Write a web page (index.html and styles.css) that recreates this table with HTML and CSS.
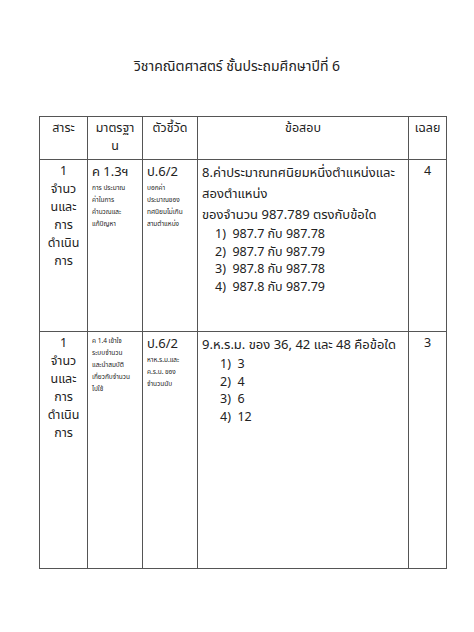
FILE: index.html
```html
<!DOCTYPE html>
<html lang="th">
<head>
<meta charset="utf-8">
<link rel="stylesheet" href="styles.css">
</head>
<body>
<div class="page">
  <h1 class="title">วิชาคณิตศาสตร์ ชั้นประถมศึกษาปีที่ 6</h1>
  <table class="exam">
    <colgroup>
      <col class="c1"><col class="c2"><col class="c3"><col class="c4"><col class="c5">
    </colgroup>
    <thead>
      <tr class="head">
        <th>สาระ</th>
        <th>มาตรฐา<br>น</th>
        <th>ตัวชี้วัด</th>
        <th>ข้อสอบ</th>
        <th>เฉลย</th>
      </tr>
    </thead>
    <tbody>
      <tr class="r1">
        <td class="strand">1<br>จำนว<br>นและ<br>การ<br>ดำเนิน<br>การ</td>
        <td class="std"><div class="code">ค 1.3ฯ</div><div class="small">การ ประมาณ<br>ค่าในการ<br>คำนวณและ<br>แก้ปัญหา</div></td>
        <td class="std"><div class="code">ป.6/2</div><div class="small">บอกค่า<br>ประมาณของ<br>ทศนิยมไม่เกิน<br>สามตำแหน่ง</div></td>
        <td class="q">
          <div class="qtext">8.ค่าประมาณทศนิยมหนึ่งตำแหน่งและ<br>สองตำแหน่ง<br>ของจำนวน 987.789 ตรงกับข้อใด</div>
          <ol class="opts">
            <li>1)&nbsp; 987.7 กับ 987.78</li>
            <li>2)&nbsp; 987.7 กับ 987.79</li>
            <li>3)&nbsp; 987.8 กับ 987.78</li>
            <li>4)&nbsp; 987.8 กับ 987.79</li>
          </ol>
        </td>
        <td class="ans">4</td>
      </tr>
      <tr class="r2">
        <td class="strand">1<br>จำนว<br>นและ<br>การ<br>ดำเนิน<br>การ</td>
        <td class="std"><div class="small top">ค 1.4 เข้าใจ<br>ระบบจำนวน<br>และนำสมบัติ<br>เกี่ยวกับจำนวน<br>ไปใช้</div></td>
        <td class="std"><div class="code">ป.6/2</div><div class="small">หาห.ร.ม.และ<br>ค.ร.น. ของ<br>จำนวนนับ</div></td>
        <td class="q">
          <div class="qtext">9.ห.ร.ม. ของ 36, 42 และ 48 คือข้อใด</div>
          <ol class="opts opts2">
            <li>1)&nbsp; 3</li>
            <li>2)&nbsp; 4</li>
            <li>3)&nbsp; 6</li>
            <li>4)&nbsp; 12</li>
          </ol>
        </td>
        <td class="ans">3</td>
      </tr>
    </tbody>
  </table>
</div>
</body>
</html>
```
FILE: styles.css
```css
html, body {
  margin: 0;
  padding: 0;
  background: #fff;
}
body {
  font-family: Tahoma, "Noto Sans Thai", "Leelawadee UI", Loma, Garuda, "DejaVu Sans", "Noto Sans", sans-serif;
  color: #222;
}
.page {
  width: 474px;
  height: 632px;
  padding-top: 57px;
  box-sizing: border-box;
}
.title {
  margin: 0;
  font-size: 14px;
  font-weight: normal;
  line-height: 20px;
  text-align: center;
}
.exam {
  margin: 39px 0 0 39px;
  width: 407px;
  border-collapse: collapse;
  table-layout: fixed;
}
.c1 { width: 48px; }
.c2 { width: 55px; }
.c3 { width: 55px; }
.c4 { width: 211px; }
.c5 { width: 38px; }
.exam th, .exam td {
  border: 1px solid #555;
  vertical-align: top;
  padding: 3px 4px;
  font-size: 12.5px;
  line-height: 18px;
  overflow: hidden;
}
.exam th {
  font-weight: normal;
  text-align: center;
}
.head { height: 42px; }
.r1 { height: 172px; }
.r2 { height: 237px; }
.strand {
  text-align: center;
}
.std {
  padding-left: 4px;
  padding-right: 2px;
}
.code {
  font-size: 13px;
  line-height: 18px;
}
.small {
  font-size: 6.5px;
  line-height: 12px;
  margin-top: 1px;
  white-space: nowrap;
}
.small.top {
  margin-top: 0;
}
.q {
  padding-left: 5px;
  padding-right: 4px;
}
.qtext {
  font-size: 13px;
  line-height: 21px;
}
.opts {
  list-style: none;
  margin: 0;
  padding: 0 0 0 13px;
  font-size: 12.5px;
  line-height: 17.5px;
}
.opts2 {
  padding-left: 18px;
}
.ans {
  text-align: center;
  font-size: 13px;
}
```
